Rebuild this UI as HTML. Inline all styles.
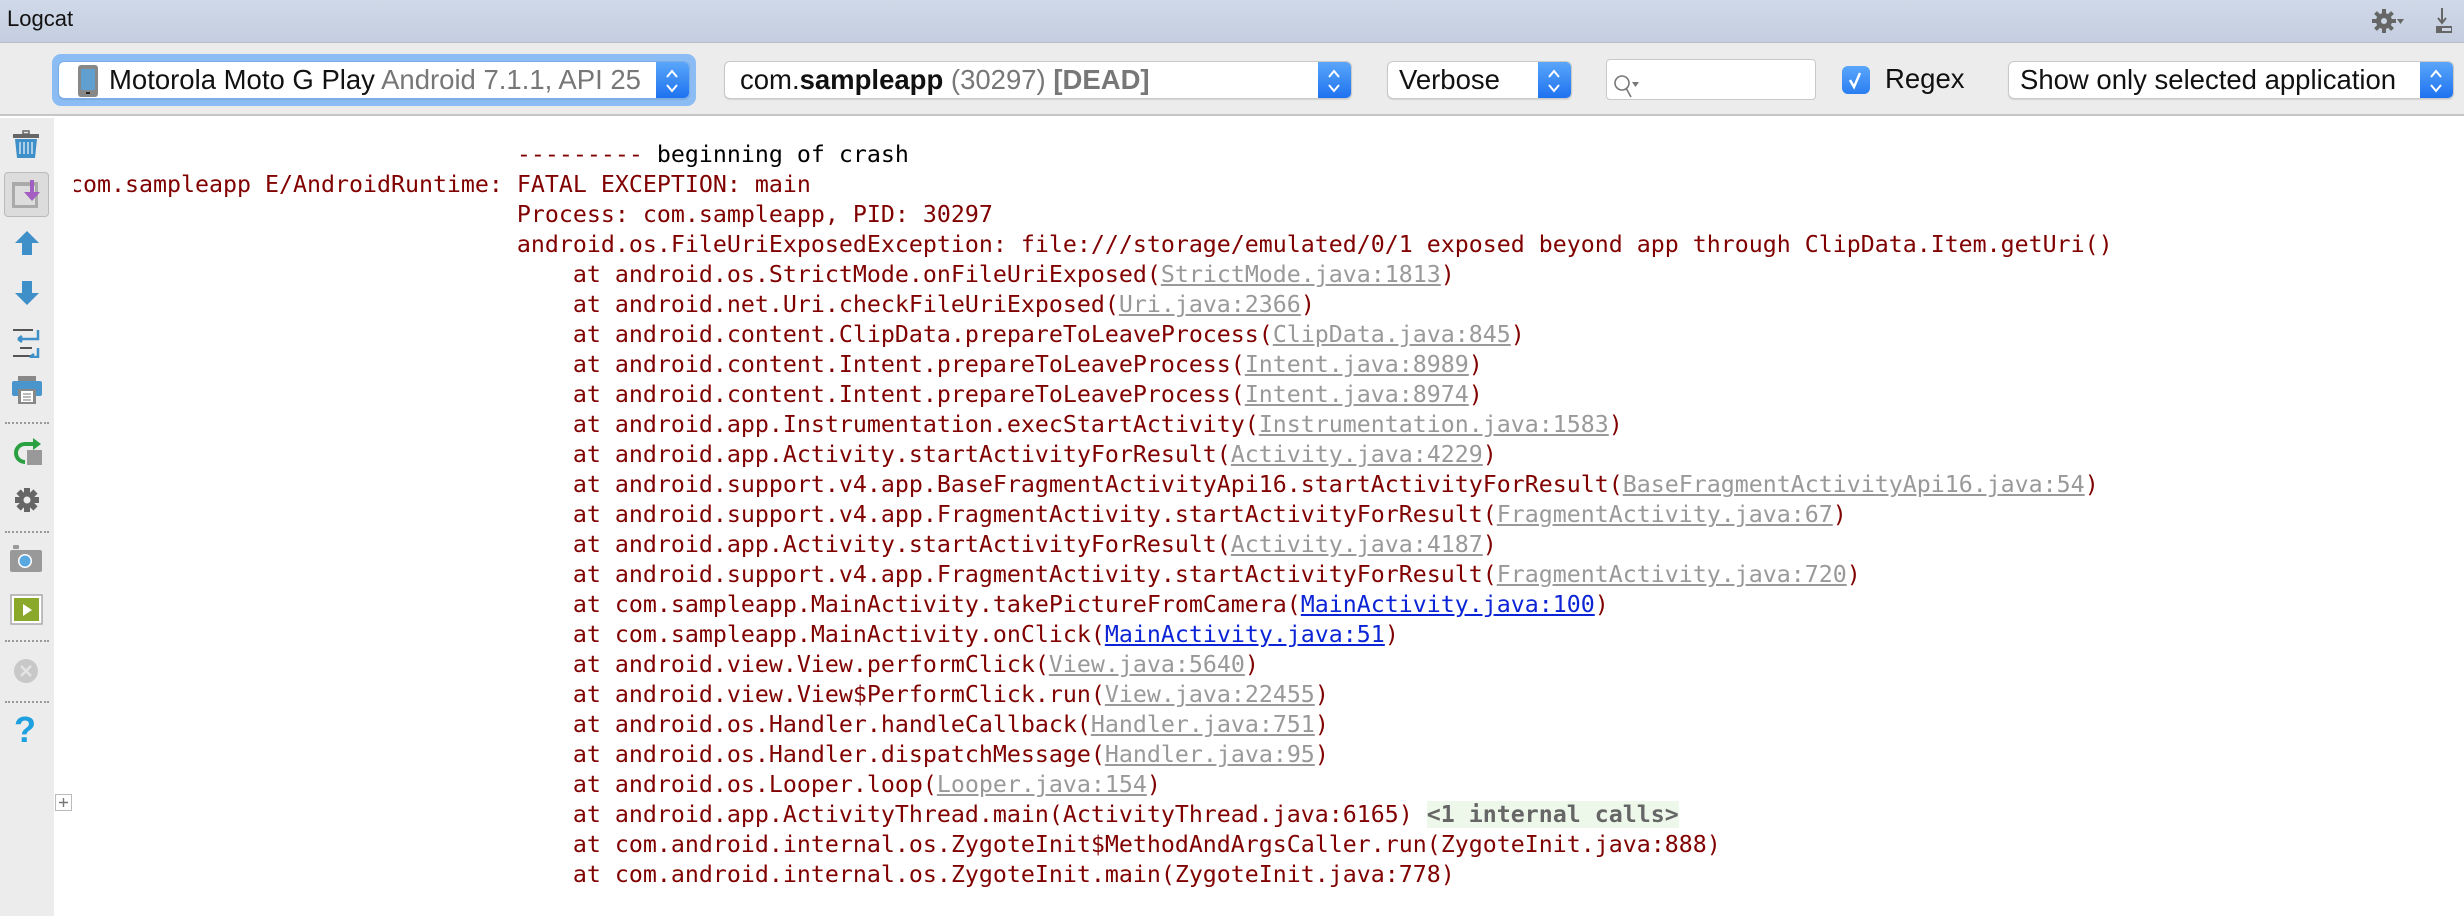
<!DOCTYPE html>
<html><head><meta charset="utf-8"><style>
*{margin:0;padding:0;box-sizing:border-box}
body{width:2464px;height:916px;overflow:hidden;background:#fff;position:relative;font-family:"Liberation Sans",Helvetica,sans-serif}
.title{position:absolute;left:0;top:0;width:2464px;height:43px;background:linear-gradient(#d0d9e8,#c4cee0);border-bottom:1px solid #b8c0d0}
.title span{position:absolute;left:7px;top:6px;font-size:22px;color:#111}
.tb{position:absolute;left:0;top:43px;width:2464px;height:73px;background:#ececec;border-bottom:2px solid #c6c6c6}
.combo{position:absolute;top:61px;height:38px;background:#fff;border:1px solid #c9c9c9;border-radius:6px;font-size:27.5px;line-height:36px;color:#111;white-space:nowrap;overflow:hidden;box-shadow:0 1px 1px rgba(0,0,0,.1)}
.arr{position:absolute;right:0;top:0;width:33px;height:100%;background:linear-gradient(#5aa6fa,#1e72f0)}
.arr svg{position:absolute;left:8px;top:6px}
.side{position:absolute;left:0;top:118px;width:54px;height:798px;background:#ececec}
.sep{position:absolute;left:5px;width:44px;border-top:2px dotted #999}
.log{position:absolute;left:69px;top:140px;font-family:"DejaVu Sans Mono","Liberation Mono",monospace;font-size:23.25px;line-height:30px;color:#800000;white-space:pre}
.l{color:#999;text-decoration:underline}
.b{color:#0b24d6;text-decoration:underline}
.ic{color:#666;font-weight:bold;background:#eef8ea}
</style></head><body>
<div class="title"><span>Logcat</span>
<svg style="position:absolute;left:2372px;top:7px" width="34" height="30" viewBox="0 0 34 30"><g fill="#666"><circle cx="12" cy="14" r="8"/><rect x="10" y="2" width="4" height="24"/><rect x="0" y="12" width="24" height="4"/><rect x="10" y="2" width="4" height="24" transform="rotate(45 12 14)"/><rect x="10" y="2" width="4" height="24" transform="rotate(-45 12 14)"/><circle cx="12" cy="14" r="3" fill="#ccd4e4"/><path d="M25 12h7l-3.5 5z"/></g></svg>
<svg style="position:absolute;left:2434px;top:8px" width="20" height="26" viewBox="0 0 20 26"><path d="M8 0v14M4 10l4 5 4-5" stroke="#666" stroke-width="2" fill="none"/><rect x="2" y="18" width="16" height="7" fill="#666"/><rect x="8" y="20" width="9" height="3" fill="#ccd4e4"/></svg>
</div>
<div class="tb"></div>
<div style="position:absolute;left:52px;top:54px;width:644px;height:52px;border-radius:9px;background:#8cbcf4"></div>
<div class="combo" style="left:58px;width:632px;border-color:#7aaee8">
<svg style="position:absolute;left:18px;top:2px" width="22" height="34" viewBox="0 0 22 34"><rect x="1" y="1" width="20" height="32" rx="3" fill="#888"/><rect x="4" y="5" width="14" height="21" fill="#5fa0d0"/><rect x="9" y="28" width="4" height="2" fill="#222"/></svg>
<span style="position:absolute;left:50px">Motorola Moto G Play <span style="color:#777">Android 7.1.1, API 25</span></span>
<div class="arr"><svg width="16" height="26" viewBox="0 0 16 26"><path d="M3 9l5-6 5 6M3 17l5 6 5-6" stroke="#fff" stroke-width="2" fill="none"/></svg></div></div>
<div class="combo" style="left:724px;width:628px"><span style="position:absolute;left:15px">com.<b>sampleapp</b> <span style="color:#777">(30297) <b>[DEAD]</b></span></span>
<div class="arr"><svg width="16" height="26" viewBox="0 0 16 26"><path d="M3 9l5-6 5 6M3 17l5 6 5-6" stroke="#fff" stroke-width="2" fill="none"/></svg></div></div>
<div class="combo" style="left:1387px;width:185px"><span style="position:absolute;left:11px">Verbose</span>
<div class="arr"><svg width="16" height="26" viewBox="0 0 16 26"><path d="M3 9l5-6 5 6M3 17l5 6 5-6" stroke="#fff" stroke-width="2" fill="none"/></svg></div></div>
<div class="combo" style="left:1606px;top:59px;width:210px;height:41px;border-radius:4px;box-shadow:none">
<svg style="position:absolute;left:6px;top:14px" width="30" height="26" viewBox="0 0 30 26"><circle cx="9" cy="9" r="7" stroke="#777" stroke-width="1.6" fill="none"/><path d="M13 14l5 9" stroke="#777" stroke-width="1.6"/><path d="M19 8h7l-3.5 5z" fill="#777"/></svg></div>
<div style="position:absolute;left:1842px;top:66px;width:28px;height:28px;border-radius:6px;background:linear-gradient(#5aa6fa,#2a7ef2)"><svg width="28" height="28" viewBox="0 0 28 28"><path d="M8 14l4 7 6-14" stroke="#fff" stroke-width="2.4" fill="none"/></svg></div>
<div style="position:absolute;left:1885px;top:61px;font-size:27.5px;line-height:36px;color:#111">Regex</div>
<div class="combo" style="left:2008px;width:446px"><span style="position:absolute;left:11px">Show only selected application</span>
<div class="arr"><svg width="16" height="26" viewBox="0 0 16 26"><path d="M3 9l5-6 5 6M3 17l5 6 5-6" stroke="#fff" stroke-width="2" fill="none"/></svg></div></div>

<div class="log">                                --------- <span style="color:#000">beginning of crash</span>
com.sampleapp E/AndroidRuntime: FATAL EXCEPTION: main
                                Process: com.sampleapp, PID: 30297
                                android.os.FileUriExposedException: file:///storage/emulated/0/1 exposed beyond app through ClipData.Item.getUri()
                                    at android.os.StrictMode.onFileUriExposed(<span class="l">StrictMode.java:1813</span>)
                                    at android.net.Uri.checkFileUriExposed(<span class="l">Uri.java:2366</span>)
                                    at android.content.ClipData.prepareToLeaveProcess(<span class="l">ClipData.java:845</span>)
                                    at android.content.Intent.prepareToLeaveProcess(<span class="l">Intent.java:8989</span>)
                                    at android.content.Intent.prepareToLeaveProcess(<span class="l">Intent.java:8974</span>)
                                    at android.app.Instrumentation.execStartActivity(<span class="l">Instrumentation.java:1583</span>)
                                    at android.app.Activity.startActivityForResult(<span class="l">Activity.java:4229</span>)
                                    at android.support.v4.app.BaseFragmentActivityApi16.startActivityForResult(<span class="l">BaseFragmentActivityApi16.java:54</span>)
                                    at android.support.v4.app.FragmentActivity.startActivityForResult(<span class="l">FragmentActivity.java:67</span>)
                                    at android.app.Activity.startActivityForResult(<span class="l">Activity.java:4187</span>)
                                    at android.support.v4.app.FragmentActivity.startActivityForResult(<span class="l">FragmentActivity.java:720</span>)
                                    at com.sampleapp.MainActivity.takePictureFromCamera(<span class="b">MainActivity.java:100</span>)
                                    at com.sampleapp.MainActivity.onClick(<span class="b">MainActivity.java:51</span>)
                                    at android.view.View.performClick(<span class="l">View.java:5640</span>)
                                    at android.view.View$PerformClick.run(<span class="l">View.java:22455</span>)
                                    at android.os.Handler.handleCallback(<span class="l">Handler.java:751</span>)
                                    at android.os.Handler.dispatchMessage(<span class="l">Handler.java:95</span>)
                                    at android.os.Looper.loop(<span class="l">Looper.java:154</span>)
                                    at android.app.ActivityThread.main(ActivityThread.java:6165) <span class="ic">&lt;1 internal calls&gt;</span>
                                    at com.android.internal.os.ZygoteInit$MethodAndArgsCaller.run(ZygoteInit.java:888)
                                    at com.android.internal.os.ZygoteInit.main(ZygoteInit.java:778)</div>
<div style="position:absolute;left:54px;top:118px;width:20px;height:798px;background:#fff"></div>
<div style="position:absolute;left:55px;top:794px;width:17px;height:17px;border:1px solid #bbb;background:#fff"><svg width="15" height="15" viewBox="0 0 15 15"><path d="M7.5 3v9M3 7.5h9" stroke="#777" stroke-width="1.4"/></svg></div>

<div class="side">
<svg style="position:absolute;left:12px;top:10px" width="28" height="32" viewBox="0 0 28 32"><path d="M11 3h6v3h-6z" fill="none" stroke="#666" stroke-width="1.5"/><rect x="1" y="6" width="26" height="4" fill="#666"/><path d="M3 11h22l-2 19H5z" fill="#3f8fc8"/><path d="M8 14v12M12 14v12M16 14v12M20 14v12" stroke="#cfe4f4" stroke-width="1.5"/></svg>
<div style="position:absolute;left:4px;top:54px;width:45px;height:45px;border:1px solid #bbb;border-radius:4px;background:#dcdcdc"></div>
<svg style="position:absolute;left:11px;top:61px" width="32" height="30" viewBox="0 0 32 30"><rect x="1" y="3" width="26" height="26" fill="#aaa"/><rect x="4" y="7" width="20" height="19" fill="#ddd"/><path d="M19 1v12h-6l8 9 8-9h-6V1z" fill="#a25ec0"/></svg>
<svg style="position:absolute;left:14px;top:112px" width="26" height="26" viewBox="0 0 26 26"><path d="M13 1l12 12h-7v12h-10v-12h-7z" fill="#3f8fc8"/></svg>
<svg style="position:absolute;left:14px;top:162px" width="26" height="26" viewBox="0 0 26 26"><path d="M13 25l12-12h-7v-12h-10v12h-7z" fill="#3f8fc8"/></svg>
<svg style="position:absolute;left:12px;top:210px" width="30" height="30" viewBox="0 0 30 30"><path d="M1 2h20M8 11h12M8 20h12M1 28h20" stroke="#555" stroke-width="2"/><path d="M26 2v9h-20M26 20v9h-8M6 11l4-3M6 11l4 3M18 29l4-3M18 29l4 3" stroke="#3f8fc8" stroke-width="2.5" fill="none"/></svg>
<svg style="position:absolute;left:11px;top:258px" width="32" height="28" viewBox="0 0 32 28"><rect x="7" y="0" width="18" height="5" fill="#888"/><rect x="1" y="5" width="30" height="15" rx="2" fill="#4a96cc"/><rect x="7" y="13" width="18" height="15" fill="#888"/><rect x="10" y="15" width="12" height="11" fill="#fff"/><path d="M12 18h8M12 21h8M12 24h8" stroke="#777"/></svg>
<div class="sep" style="top:304px"></div>
<svg style="position:absolute;left:11px;top:318px" width="32" height="30" viewBox="0 0 32 30"><path d="M24 8H14a9 9 0 0 0 0 18" stroke="#2aa040" stroke-width="4" fill="none"/><path d="M22 2l8 6-8 6z" fill="#2aa040"/><rect x="16" y="14" width="15" height="15" fill="#999"/></svg>
<svg style="position:absolute;left:13px;top:368px" width="28" height="28" viewBox="0 0 28 28"><g fill="#666"><circle cx="14" cy="14" r="8"/><rect x="11" y="2" width="6" height="24"/><rect x="2" y="11" width="24" height="6"/><rect x="11" y="2" width="6" height="24" transform="rotate(45 14 14)"/><rect x="11" y="2" width="6" height="24" transform="rotate(-45 14 14)"/></g><circle cx="14" cy="14" r="3.5" fill="#ececec"/></svg>
<div class="sep" style="top:413px"></div>
<svg style="position:absolute;left:9px;top:427px" width="34" height="28" viewBox="0 0 34 28"><rect x="4" y="0" width="6" height="4" rx="1" fill="#999"/><rect x="1" y="5" width="32" height="22" rx="2" fill="#999"/><circle cx="16" cy="16" r="7" fill="#fff"/><circle cx="16" cy="16" r="5.5" fill="#5aa8e0"/></svg>
<svg style="position:absolute;left:10px;top:476px" width="33" height="31" viewBox="0 0 33 31"><rect x="1" y="1" width="31" height="29" fill="#fff" stroke="#aaa" stroke-width="1.5"/><rect x="4" y="4" width="25" height="23" fill="#8aa82a"/><path d="M13 10l9 6-9 6z" fill="#fff"/></svg>
<div class="sep" style="top:522px"></div>
<svg style="position:absolute;left:13px;top:540px" width="26" height="26" viewBox="0 0 26 26"><circle cx="13" cy="13" r="12" fill="#c8c8c8"/><path d="M8 8l10 10M18 8l-10 10" stroke="#e4e4e4" stroke-width="2.5"/></svg>
<div class="sep" style="top:583px"></div>
<div style="position:absolute;left:14px;top:594px;font-size:36px;font-weight:bold;color:#1ea0e0;line-height:36px">?</div>
</div>
</body></html>
